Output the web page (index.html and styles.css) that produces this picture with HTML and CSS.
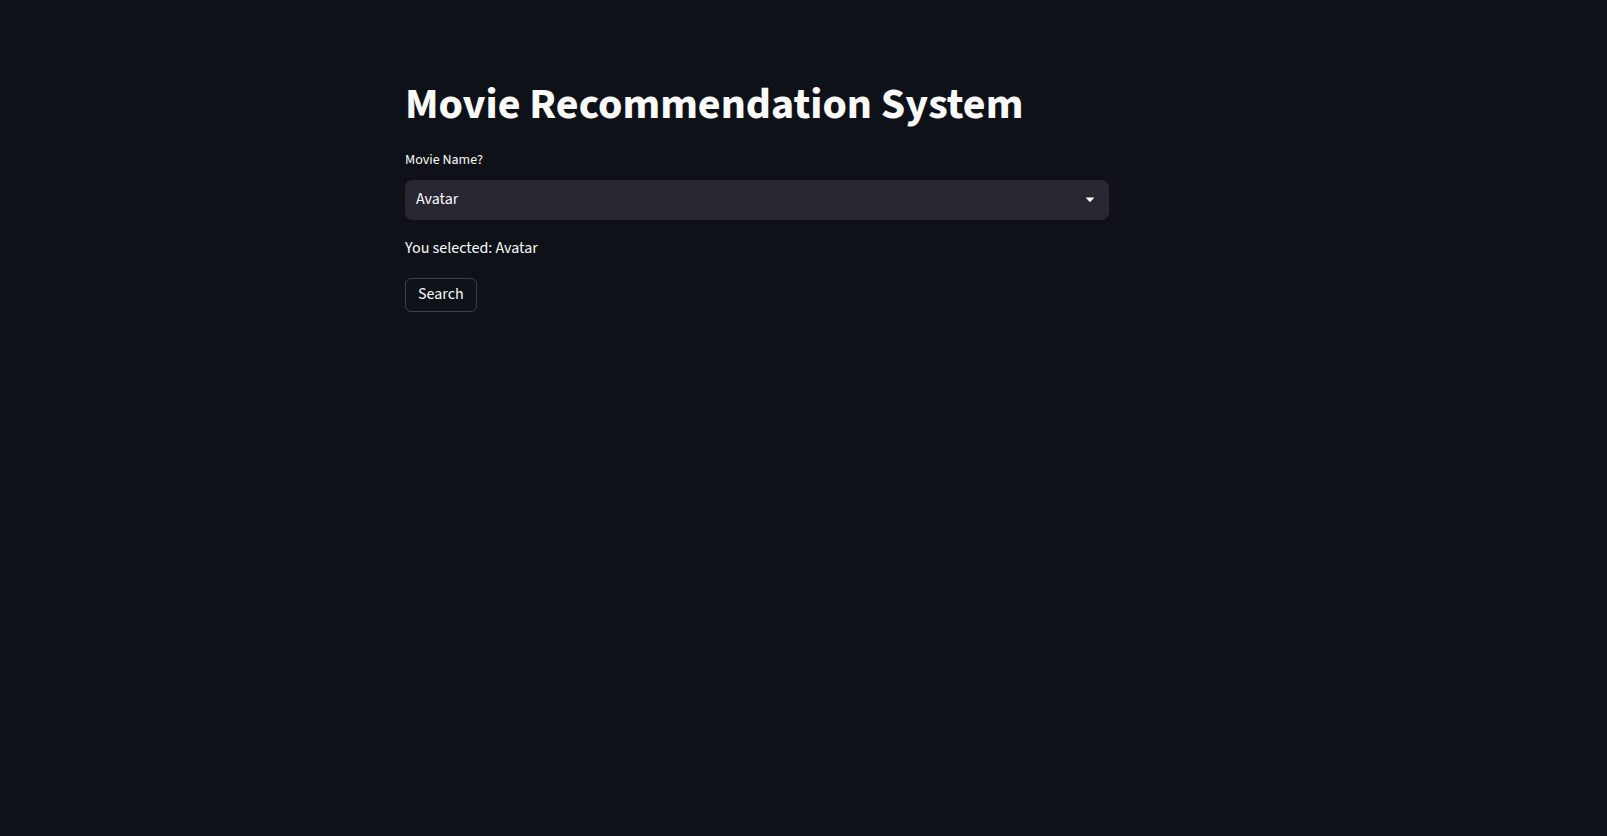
FILE: index.html
```html
<!DOCTYPE html>
<html lang="en">
<head>
<meta charset="utf-8">
<title>Movie Recommendation System</title>
<link rel="stylesheet" href="styles.css">
</head>
<body>
<main class="main">
  <h1 class="title">Movie Recommendation System</h1>
  <label class="label">Movie Name?</label>
  <div class="select">
    <span class="select-value">Avatar</span>
    <svg class="select-arrow" width="10" height="6" viewBox="0 0 10 6" aria-hidden="true"><path d="M0.6 0.6 H9.4 L5 5.2 Z" fill="#fafafa"/></svg>
  </div>
  <p class="selected">You selected: Avatar</p>
  <div class="actions"><button class="btn" type="button">Search</button></div>
</main>
</body>
</html>
```
FILE: styles.css
```css
html, body {
  margin: 0;
  padding: 0;
  background: #0e1117;
  color: #fafafa;
  font-family: "Source Sans 3", "Lato", sans-serif;
  min-height: 100%;
}
body { min-height: 836px; }
.main {
  width: 704px;
  padding: 79px 0 0 405px;
  display: flex;
  flex-direction: column;
  align-items: stretch;
}
.title {
  margin: 0 0 17px;
  font-size: 44px;
  font-weight: 700;
  line-height: 1.2;
  color: #fafafa;
}
.label {
  display: block;
  font-size: 14px;
  line-height: 1.6;
  margin-bottom: 9px;
}
.select {
  height: 40px;
  box-sizing: border-box;
  background: #262730;
  border-radius: 7px;
  display: flex;
  align-items: center;
  justify-content: space-between;
  padding: 0 14px 0 11px;
  font-size: 16px;
  line-height: 1.6;
}
.select-arrow { display: block; }
.selected {
  margin: 16px 0 0;
  font-size: 16px;
  line-height: 1.6;
}
.actions { margin-top: 16px; display: flex; }
.btn {
  height: 34px;
  box-sizing: border-box;
  padding: 0 12px;
  background: transparent;
  color: #fafafa;
  border: 1px solid rgba(250, 250, 250, 0.2);
  border-radius: 6px;
  font-family: inherit;
  font-size: 16px;
  line-height: 1.6;
}
```
